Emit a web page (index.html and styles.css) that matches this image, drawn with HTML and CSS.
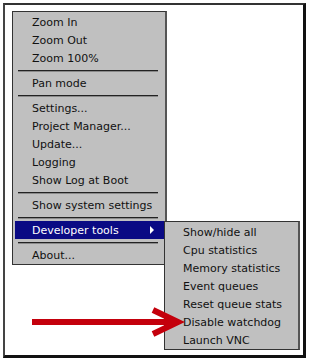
FILE: index.html
```html
<!DOCTYPE html>
<html>
<head>
<meta charset="utf-8">
<link rel="stylesheet" href="styles.css">
</head>
<body>
<div class="frame">
  <div class="menu">
    <div class="item">Zoom In</div>
    <div class="item">Zoom Out</div>
    <div class="item">Zoom 100%</div>
    <div class="sep"></div>
    <div class="item">Pan mode</div>
    <div class="sep"></div>
    <div class="item">Settings...</div>
    <div class="item">Project Manager...</div>
    <div class="item">Update...</div>
    <div class="item">Logging</div>
    <div class="item">Show Log at Boot</div>
    <div class="sep"></div>
    <div class="item">Show system settings</div>
    <div class="sep"></div>
    <div class="item active">Developer tools<span class="caret"></span></div>
    <div class="sep"></div>
    <div class="item">About...</div>
  </div>
  <div class="submenu">
    <div class="item">Show/hide all</div>
    <div class="item">Cpu statistics</div>
    <div class="item">Memory statistics</div>
    <div class="item">Event queues</div>
    <div class="item">Reset queue stats</div>
    <div class="item">Disable watchdog</div>
    <div class="item">Launch VNC</div>
  </div>
  <svg class="arrow" width="160" height="30" viewBox="0 0 160 30">
    <line x1="0" y1="15" x2="144" y2="15" stroke="#c4000c" stroke-width="6"/>
    <polyline points="121,3 146,15 121,27" fill="none" stroke="#c4000c" stroke-width="6" stroke-linejoin="miter"/>
  </svg>
</div>
</body>
</html>
```
FILE: styles.css
```css
html, body {
  margin: 0;
  padding: 0;
  background: #fff;
}
body {
  font-family: "DejaVu Sans", Verdana, sans-serif;
  font-size: 11px;
  color: #111;
}
.frame {
  position: relative;
  margin: 3px 0 0 3px;
  border-top: 2px solid #333;
  border-left: 2px solid #444;
  border-right: 3px solid #111;
  border-bottom: 3px solid #111;
  padding: 6px 0 0 7px;
  box-sizing: content-box;
  width: 291px;
  height: 344px;
}
.menu {
  width: 152px;
  background: #c0c0c0;
  border: 1px solid #333;
  border-right: 2px solid #555;
  padding: 1px 0 0 0;
}
.item {
  height: 18px;
  line-height: 20px;
  padding-left: 19px;
  position: relative;
  white-space: nowrap;
}
.menu .active {
  margin: 0 1px 0 2px;
  padding-left: 17px;
  background: #0a0a84;
  color: #fff;
}
.caret {
  position: absolute;
  left: 135px;
  top: 5px;
  width: 0;
  height: 0;
  border-top: 4px solid transparent;
  border-bottom: 4px solid transparent;
  border-left: 4px solid #fff;
}
.sep {
  height: 7px;
  position: relative;
}
.sep::before {
  content: "";
  position: absolute;
  left: 5px;
  right: 7px;
  top: 3px;
  height: 1px;
  background: #222;
  box-shadow: 0 1px 0 #8a8a8a;
}
.submenu {
  position: absolute;
  left: 159px;
  top: 216px;
  width: 133px;
  height: 126px;
  background: #c0c0c0;
  border: 1px solid #333;
  border-right: 2px solid #555;
  padding-top: 1px;
}
.submenu .item {
  padding-left: 18px;
}
.arrow {
  position: absolute;
  left: 27px;
  top: 302px;
}
```
